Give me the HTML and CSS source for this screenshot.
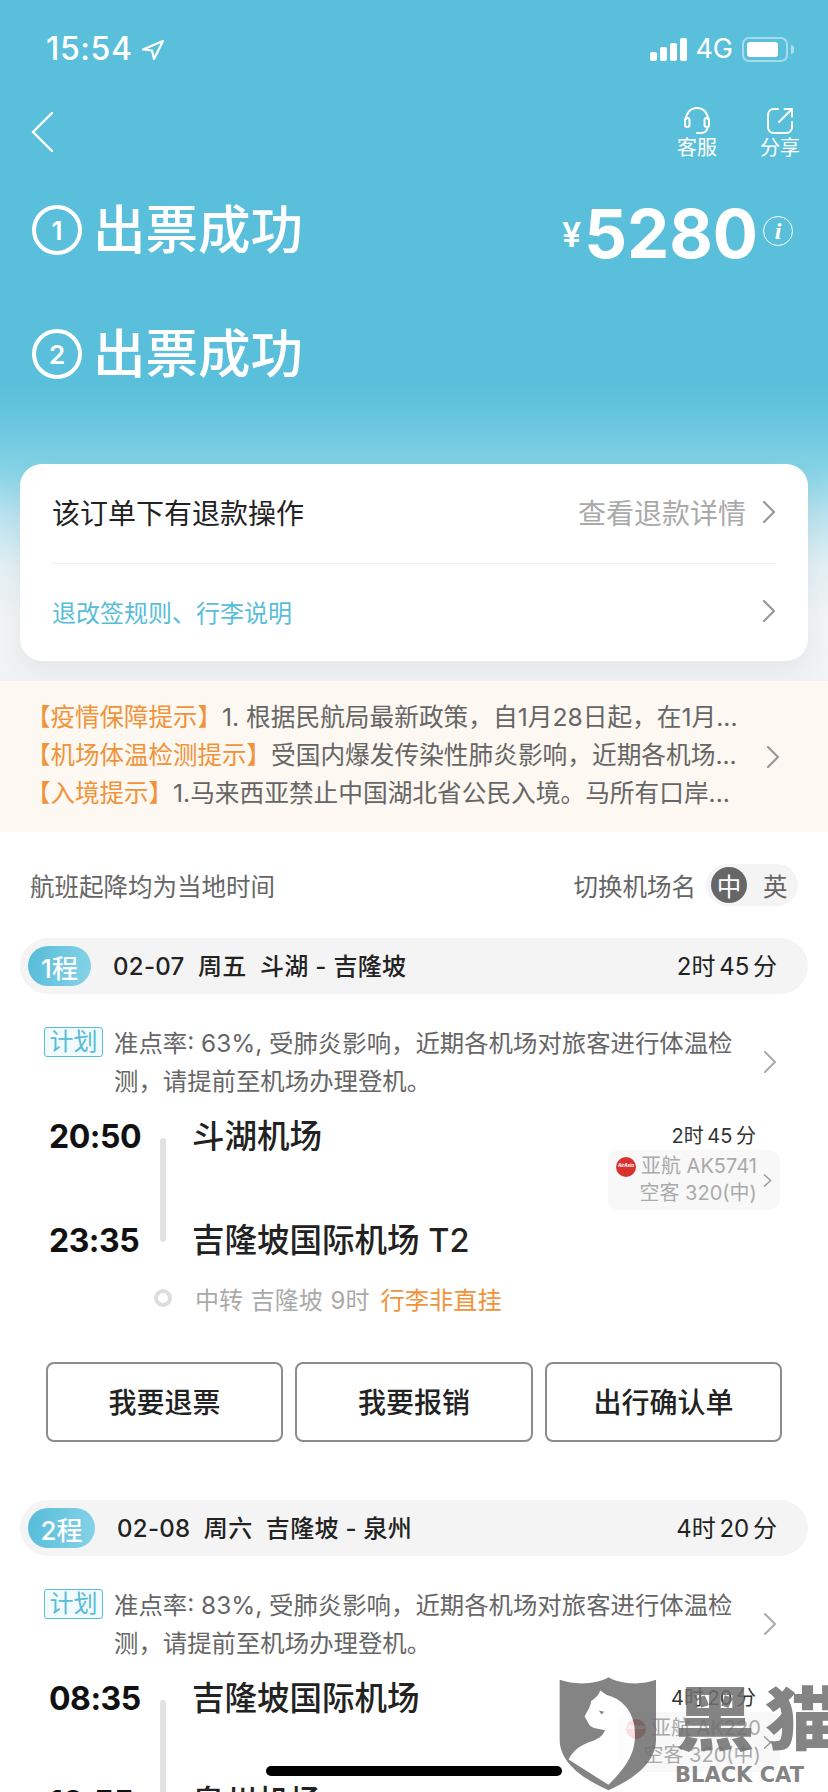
FILE: index.html
```html
<!DOCTYPE html>
<html lang="zh-CN">
<head>
<meta charset="utf-8">
<title>出票成功</title>
<link rel="stylesheet" href="styles.css">
</head>
<body>
<div class="phone">
  <section class="top">
    <div class="status">
      <div class="status-left">
        <span class="clock">15:54</span>
        <svg class="loc" viewBox="0 0 22 20" width="22" height="20"><path d="M21 1 1 9.500l9 1 2 8.500z" fill="none" stroke="#fff" stroke-width="2.200" stroke-linejoin="round"/></svg>
      </div>
      <div class="status-right">
        <div class="bars"><i class="b1"></i><i class="b2"></i><i class="b3"></i><i class="b4"></i></div>
        <span class="net">4G</span>
        <div class="battery"><div class="battery-fill"></div></div>
        <div class="nub"></div>
      </div>
    </div>
    <div class="nav">
      <svg class="back" viewBox="0 0 22 40" width="22" height="40"><path d="M21 1 2 20l19 19" fill="none" stroke="#fff" stroke-width="2.400" stroke-linecap="round" stroke-linejoin="round"/></svg>
      <div class="nav-actions">
        <div class="nav-item">
          <svg viewBox="0 0 30 30" width="30" height="30"><path d="M4 14C4 7 8.500 2 15 2s11 5 11 12" fill="none" stroke="#fff" stroke-width="2"/><rect x="3" y="12" width="4.500" height="9" rx="2.200" fill="none" stroke="#fff" stroke-width="2"/><rect x="22.500" y="12" width="4.500" height="9" rx="2.200" fill="none" stroke="#fff" stroke-width="2"/><path d="M25.500 21c0 4-3 6-6.500 6h-4" fill="none" stroke="#fff" stroke-width="2" stroke-linecap="round"/></svg>
          <span>客服</span>
        </div>
        <div class="nav-item">
          <svg viewBox="0 0 30 30" width="30" height="30"><path d="M13 3H9C5.500 3 3 5.500 3 9v12c0 3.500 2.500 6 6 6h12c3.500 0 6-2.500 6-6v-5" fill="none" stroke="#fff" stroke-width="2" stroke-linecap="round"/><path d="M14 16 27 3M19.500 3H27v7.500" fill="none" stroke="#fff" stroke-width="2" stroke-linecap="round" stroke-linejoin="round"/></svg>
          <span>分享</span>
        </div>
      </div>
    </div>
    <div class="titles">
      <div class="title-row">
        <span class="num">1</span>
        <h1>出票成功</h1>
        <div class="price">
          <span class="yen">¥</span><span class="amount">5280</span>
          <span class="info">i</span>
        </div>
      </div>
      <div class="title-row">
        <span class="num">2</span>
        <h1>出票成功</h1>
      </div>
    </div>
    <div class="card">
      <div class="card-row card-row-first">
        <span class="refund">该订单下有退款操作</span>
        <span class="refund-link">查看退款详情</span>
        <svg class="chev" viewBox="0 0 14 22" width="14" height="22"><path d="m2 1 10 10L2 21" fill="none" stroke="#999" stroke-width="2.200" stroke-linecap="round" stroke-linejoin="round"/></svg>
      </div>
      <div class="card-row card-row-second">
        <span class="rules">退改签规则、行李说明</span>
        <svg class="chev" viewBox="0 0 14 22" width="14" height="22"><path d="m2 1 10 10L2 21" fill="none" stroke="#999" stroke-width="2.200" stroke-linecap="round" stroke-linejoin="round"/></svg>
      </div>
    </div>
  </section>

  <section class="notice">
    <div class="notice-lines">
      <p><b>【疫情保障提示】</b>1. 根据民航局最新政策&#65292;自1月28日起&#65292;在1月...</p>
      <p><b>【机场体温检测提示】</b>受国内爆发传染性肺炎影响&#65292;近期各机场...</p>
      <p><b>【入境提示】</b>1.马来西亚禁止中国湖北省公民入境。马所有口岸...</p>
    </div>
    <svg class="chev" viewBox="0 0 14 22" width="14" height="22"><path d="m2 1 10 10L2 21" fill="none" stroke="#999" stroke-width="2.200" stroke-linecap="round" stroke-linejoin="round"/></svg>
  </section>

  <section class="switch-row">
    <span>航班起降均为当地时间</span>
    <div class="switch">
      <span>切换机场名</span>
      <div class="toggle"><span class="on">中</span><span class="off">英</span></div>
    </div>
  </section>

  <section class="leg">
    <div class="leg-bar">
      <span class="badge">1程</span>
      <span class="leg-title">02-07&nbsp; 周五&nbsp; 斗湖 - 吉隆坡</span>
      <span class="leg-time">2时 45 分</span>
    </div>
    <div class="plan">
      <p><span class="tag">计划</span>准点率: 63%, 受肺炎影响&#65292;近期各机场对旅客进行体温检测&#65292;请提前至机场办理登机。</p>
      <svg class="chev" viewBox="0 0 14 22" width="14" height="22"><path d="m2 1 10 10L2 21" fill="none" stroke="#aaa" stroke-width="2" stroke-linecap="round" stroke-linejoin="round"/></svg>
    </div>
    <div class="flight">
      <div class="times"><span>20:50</span><span>23:35</span></div>
      <div class="rail"></div>
      <div class="names"><span>斗湖机场</span><span>吉隆坡国际机场 T2</span></div>
      <div class="info-col">
        <span class="dur">2时 45 分</span>
        <div class="carrier">
          <div class="carrier-text">
            <div class="carrier-line"><span class="logo">AirAsia</span>亚航 AK5741</div>
            <div>空客 320(中)</div>
          </div>
          <svg viewBox="0 0 10 16" width="9" height="15"><path d="m1.500 1.500 7 6.500-7 6.500" fill="none" stroke="#999" stroke-width="1.500" stroke-linecap="round" stroke-linejoin="round"/></svg>
        </div>
      </div>
    </div>
    <div class="transfer">
      <i class="ring"></i>
      <span>中转 吉隆坡 9时<em>行李非直挂</em></span>
    </div>
    <div class="actions">
      <button type="button">我要退票</button>
      <button type="button">我要报销</button>
      <button type="button">出行确认单</button>
    </div>
  </section>

  <section class="leg leg-two">
    <div class="leg-bar">
      <span class="badge badge-wide">2程</span>
      <span class="leg-title">02-08&nbsp; 周六&nbsp; 吉隆坡 - 泉州</span>
      <span class="leg-time">4时 20 分</span>
    </div>
    <div class="plan">
      <p><span class="tag">计划</span>准点率: 83%, 受肺炎影响&#65292;近期各机场对旅客进行体温检测&#65292;请提前至机场办理登机。</p>
      <svg class="chev" viewBox="0 0 14 22" width="14" height="22"><path d="m2 1 10 10L2 21" fill="none" stroke="#aaa" stroke-width="2" stroke-linecap="round" stroke-linejoin="round"/></svg>
    </div>
    <div class="flight">
      <div class="times"><span>08:35</span><span>10:55</span></div>
      <div class="rail"></div>
      <div class="names"><span>吉隆坡国际机场</span><span>泉州机场 <i class="dot"></i></span></div>
      <div class="info-col">
        <span class="dur">4时 20 分</span>
        <div class="carrier carrier-short">
          <div class="carrier-text">
            <div class="carrier-line"><span class="logo">AirAsia</span>亚航 AK220</div>
            <div>空客 320(中)</div>
          </div>
          <svg viewBox="0 0 10 16" width="9" height="15"><path d="m1.500 1.500 7 6.500-7 6.500" fill="none" stroke="#999" stroke-width="1.500" stroke-linecap="round" stroke-linejoin="round"/></svg>
        </div>
      </div>
    </div>
  </section>

  <div class="home"></div>

  <div class="watermark">
    <svg class="shield" viewBox="50 40 310 360" width="103" height="120">
      <path d="M58 60C110 78 170 72 205 52c35 20 95 26 143 8v180c0 70-70 120-143 152C132 360 58 310 58 240z" fill="#6f6f6f"/>
      <path d="M180 92l20 14c45 12 72 42 82 88 8 50-2 88-26 122-16 24-34 42-51 60l-120-76c14-30 40-46 72-56 22-8 30-16 38-32l-30-6c-14-4-20-12-24-22l-8-14c10-18 18-30 20-46 8-8 22-14 27-32z" fill="#fff"/>
      <path d="M176 152l16 4-8 8z" fill="#6f6f6f"/>
    </svg>
    <div class="wm-text">
      <span class="wm-cn">黑猫</span>
      <span class="wm-en">BLACK CAT</span>
    </div>
  </div>
</div>
</body>
</html>
```
FILE: styles.css
```css
* { box-sizing: border-box; }
html, body { margin: 0; padding: 0; background: #fff; }
body { font-family: Inter, "Noto Sans CJK SC", sans-serif; color: #222; }
p, h1 { margin: 0; }
.phone { position: relative; width: 828px; height: 1792px; overflow: hidden; background: #fff; }

/* header */
.top {
  height: 681px;
  padding: 0 20px;
  background: linear-gradient(180deg, #5abfdb 0, #5abfdb 385px, #6ac7df 425px, #85d3e6 470px, #b9e3ee 515px, #e2eff3 565px, #f2f4f5 620px, #f0f2f3 681px);
  color: #fff;
}
.status { display: flex; justify-content: space-between; align-items: center; height: 98px; margin: 0 -20px; padding: 0 34px 0 46px; }
.status-left { display: flex; align-items: center; gap: 9px; }
.clock { font-size: 32px; font-weight: 500; line-height: 36px; letter-spacing: .6px; }
.loc { margin-top: 1px; }
.status-right { display: flex; align-items: center; }
.bars { display: flex; align-items: flex-end; gap: 3px; height: 23px; margin-right: 8px; }
.bars i { display: block; width: 7px; background: #fff; border-radius: 2px; }
.b1 { height: 9px; } .b2 { height: 14px; } .b3 { height: 18px; } .b4 { height: 23px; }
.net { font-size: 27px; font-weight: 400; line-height: 32px; margin-right: 9px; }
.battery { width: 46px; height: 25px; padding: 3px; border: 2px solid rgba(255,255,255,.45); border-radius: 7px; }
.battery-fill { width: 31px; height: 100%; background: #fff; border-radius: 3px; }
.nub { width: 3px; height: 9px; margin-left: 3px; background: rgba(255,255,255,.5); border-radius: 0 3px 3px 0; }

.nav { display: flex; justify-content: space-between; height: 64px; margin: 0 -20px; padding: 8px 28px 0 31px; }
.back { margin-top: 6px; }
.nav-actions { display: flex; gap: 43px; }
.nav-item { display: flex; flex-direction: column; align-items: center; width: 40px; font-size: 20px; line-height: 24px; }
.nav-item svg { flex: none; }

.titles { display: flex; flex-direction: column; gap: 64px; margin: 38px -20px 0; padding: 0 35px 0 32px; }
.title-row { display: flex; align-items: center; height: 60px; }
.num { display: flex; align-items: center; justify-content: center; flex: none; width: 50px; height: 50px; border: 4px solid #fff; border-radius: 50%; font-size: 26px; font-weight: 600; }
h1 { margin-left: 11px; font-size: 52.500px; line-height: 60px; font-weight: 500; }
.price { display: flex; align-items: center; margin-left: auto; }
.yen { font-size: 34px; font-weight: 600; margin: 8px 3px 0 0; }
.amount { font-size: 67px; font-weight: 700; line-height: 60px; margin-top: 8px; }
.info { display: flex; align-items: center; justify-content: center; width: 30px; height: 30px; margin: 2px 0 0 5px; border: 1.500px solid #fff; border-radius: 50%; font-family: "Liberation Serif", serif; font-style: italic; font-weight: 700; font-size: 24px; }

.card { margin-top: 80px; height: 197px; padding: 0 32px; background: #fff; border-radius: 22px; box-shadow: 0 8px 26px rgba(80,90,100,.08); color: #222; }
.card-row { display: flex; align-items: center; }
.card-row-first { height: 100px; padding-bottom: 3px; border-bottom: 1.500px solid #eef0f1; font-size: 28px; }
.card-row-second { height: 96px; padding-bottom: 2px; }
.refund { margin-right: auto; }
.refund-link { color: #aaa; margin-right: 16px; }
.rules { margin-right: auto; font-size: 24px; color: #58bdd9; }

/* notice */
.notice { display: flex; align-items: center; justify-content: space-between; height: 151px; padding: 0 48px 0 26px; background: #fdf8f1; }
.notice-lines { padding-bottom: 3px; }
.notice-lines p { font-size: 24.700px; line-height: 38px; color: #666; white-space: nowrap; }
.notice-lines b { font-size: 24.500px; font-weight: 400; color: #f0933a; }

/* switch */
.switch-row { display: flex; align-items: center; justify-content: space-between; height: 106px; padding: 0 30px; font-size: 24.500px; color: #666; }
.switch { display: flex; align-items: center; gap: 10px; }
.toggle { display: flex; align-items: center; width: 92px; height: 42px; padding: 0 4px; border-radius: 21px; background: #f4f4f4; }
.on { display: flex; align-items: center; justify-content: center; flex: none; width: 36px; height: 36px; margin-left: 1px; border-radius: 50%; background: #666; color: #fff; }
.off { margin-left: 16px; }

/* leg */
.leg { padding: 0 20px; }
.leg-two { margin-top: 58px; }
.leg-bar { display: flex; align-items: center; height: 56px; padding: 0 31px 0 8px; border-radius: 28px; background: #f4f4f4; font-size: 24px; font-weight: 500; }
.badge { display: flex; align-items: center; justify-content: center; width: 63px; height: 40px; margin-right: 22px; border-radius: 20px; background: linear-gradient(100deg, #56bcd8, #86d3e8); color: #fff; font-size: 26px; font-weight: 500; }
.badge-wide { width: 67px; }
.leg-title { margin-right: auto; padding-bottom: 3px; letter-spacing: .3px; }
.leg-time { padding-bottom: 3px; font-weight: 400; word-spacing: -3px; }

.plan { display: flex; align-items: center; justify-content: space-between; height: 76px; margin-top: 30px; padding: 0 31px 0 24px; }
.plan p { width: 706px; padding-left: 70px; text-indent: -70px; font-size: 24.400px; line-height: 38px; color: #666; }
.tag { display: inline-block; width: 59px; height: 30px; margin-right: 11px; border: 1px solid #58bdd9; border-radius: 3px; background: #f1fafc; color: #58bdd9; font-size: 24px; line-height: 27px; text-align: center; text-indent: 0; vertical-align: 2px; }

.flight { display: flex; margin-top: 10px; height: 157px; padding: 0 28px 0 29px; }
.times { display: flex; flex-direction: column; gap: 50px; width: 111px; font-size: 32px; font-weight: 700; line-height: 54px; letter-spacing: -.5px; color: #111; }
.rail { flex: none; width: 6px; height: 104px; margin-top: 28px; border-radius: 3px; background: #e2e2e2; }
.names { display: flex; flex-direction: column; gap: 50px; margin-left: 26px; font-size: 32.500px; font-weight: 500; line-height: 54px; }
.info-col { display: flex; flex-direction: column; align-items: flex-end; margin-left: auto; padding-top: 12px; }
.dur { margin-right: 24px; font-size: 20px; line-height: 28px; color: #333; word-spacing: -2px; }
.carrier { display: flex; align-items: center; justify-content: space-between; width: 172px; height: 60px; padding: 0 8px; border-radius: 10px; background: #f8f8f8; color: #aaa; font-size: 20px; line-height: 27px; text-align: right; }
.carrier-short { width: 162px; }
.carrier-line { display: flex; align-items: center; gap: 5px; white-space: nowrap; }
.logo { display: flex; align-items: center; justify-content: center; flex: none; width: 20px; height: 20px; border-radius: 50%; background: #d8322e; color: #fff; font-size: 4.500px; font-style: italic; font-weight: 700; line-height: 1; overflow: hidden; }
.dot { display: inline-block; width: 20px; height: 20px; border-radius: 50%; background: #666; }

.transfer { display: flex; align-items: center; height: 38px; margin-top: 12px; padding-left: 134px; font-size: 24px; color: #aaa; white-space: pre; word-spacing: 1px; }
.ring { flex: none; width: 18px; height: 18px; margin-right: 23px; border: 4px solid #ddd; border-radius: 50%; }
.transfer em { margin-left: 11px; font-size: 24.300px; font-style: normal; color: #f0933a; }

.actions { display: grid; grid-template-columns: 237px 238px 237px; gap: 12px; margin: 45px 26px 0; }
.actions button { height: 80px; padding: 0 0 3px; border: 2px solid #8c8c8c; border-radius: 8px; background: #fff; color: #222; font: 500 28px Inter, "Noto Sans CJK SC", sans-serif; }

.home { position: absolute; left: 266px; top: 1766px; width: 296px; height: 10px; border-radius: 5px; background: #000; }

/* watermark */
.watermark { position: absolute; left: 557px; top: 1673px; display: flex; opacity: .85; }
.shield { flex: none; }
.wm-text { display: flex; flex-direction: column; margin-left: 15px; color: #6f6f6f; white-space: nowrap; }
.wm-cn { display: block; font-size: 80px; font-weight: 900; line-height: 90px; letter-spacing: 10px; transform: scaleY(.86); transform-origin: 0 70%; }
.wm-en { font: 700 21px/24px "DejaVu Sans", sans-serif; }
```
